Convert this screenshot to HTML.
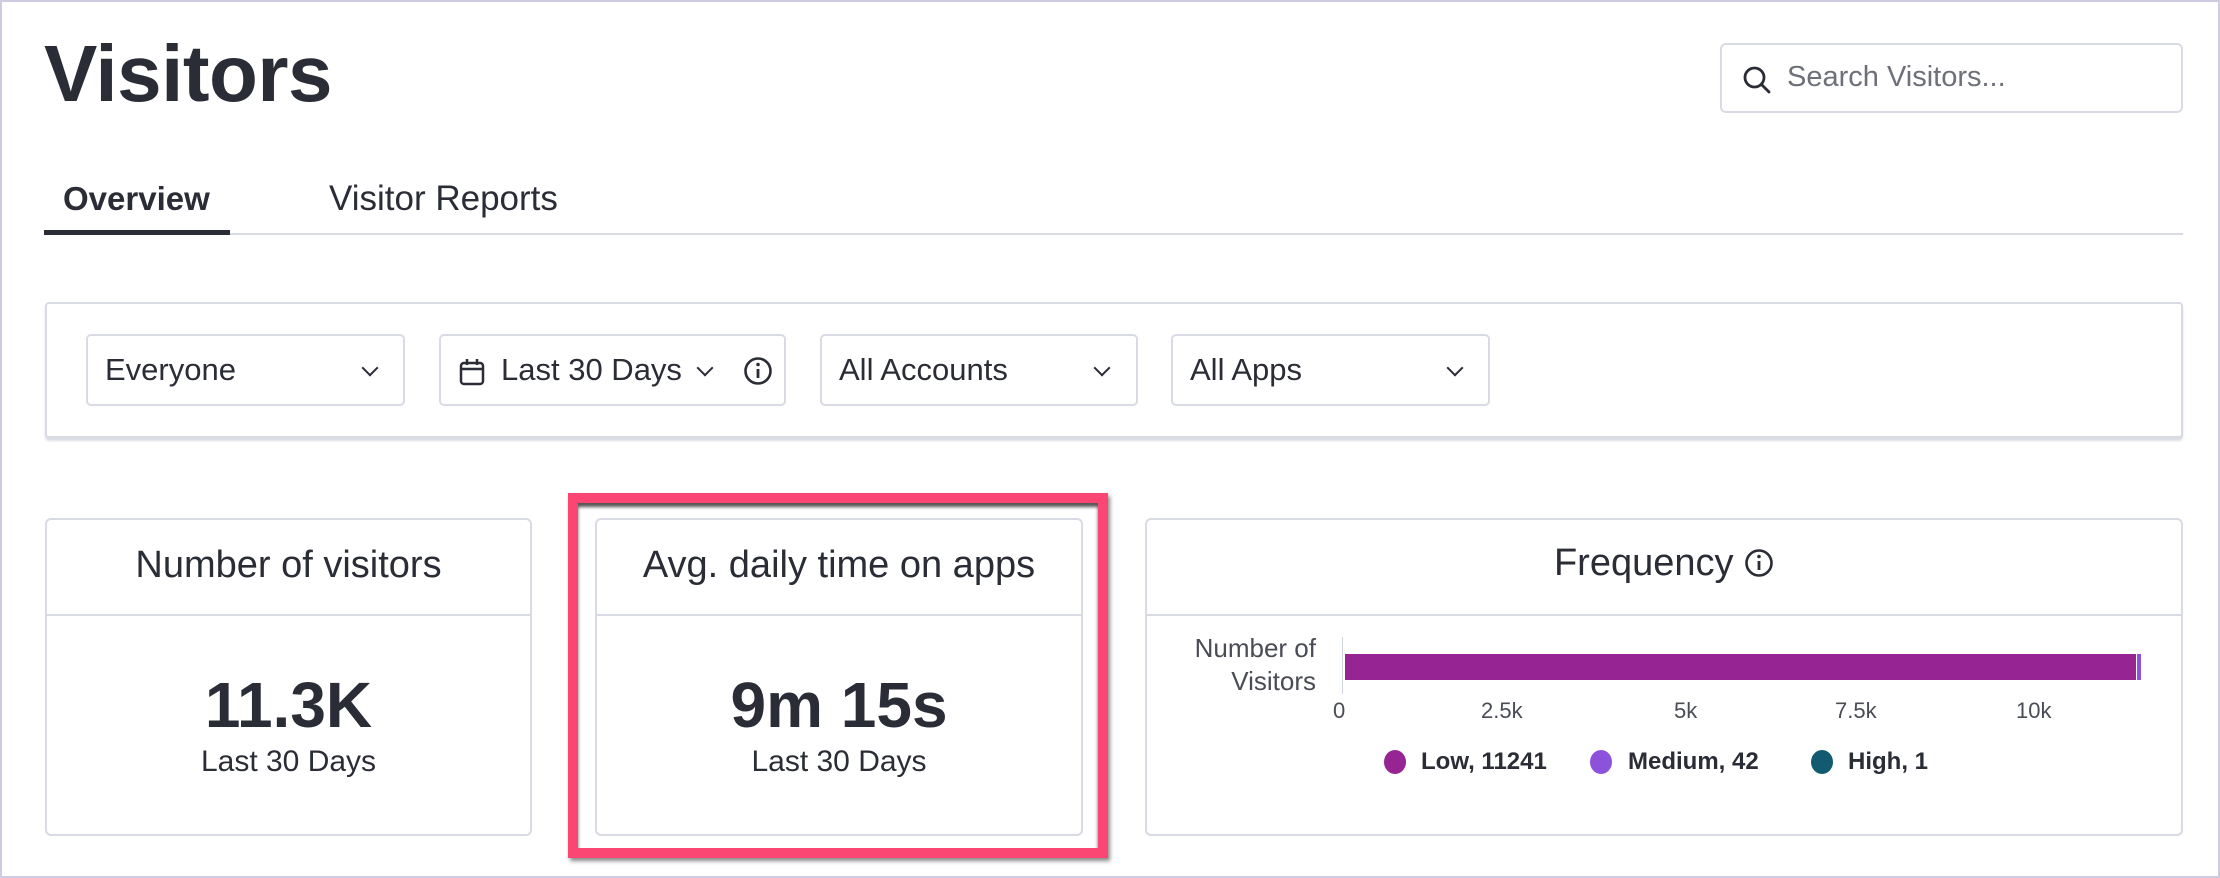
<!DOCTYPE html>
<html><head><meta charset="utf-8"><style>
*{box-sizing:border-box;margin:0;padding:0}
body{width:2220px;height:878px;background:#fff;font-family:"Liberation Sans",sans-serif;color:#2a2c36;position:relative;overflow:hidden}
.frame{position:absolute;left:0;top:0;width:2220px;height:878px;border:2px solid #cfcbe3}
.abs{position:absolute}
.box{position:absolute;border:2px solid #d9dbe4;border-radius:6px;background:#fff}
.dd{position:absolute;top:334px;height:72px;border:2px solid #d9dbe4;border-radius:5px;font-size:31px;line-height:68px;padding-left:17px}
.chev{position:absolute;top:26px;width:12px;height:12px;border-right:2.5px solid #2a2c36;border-bottom:2.5px solid #2a2c36;transform:rotate(45deg)}
.ct{position:absolute;left:0;right:0;text-align:center}
</style></head><body>
<div class="frame"></div>
<div class="abs" style="left:44px;top:28px;font-size:80px;font-weight:bold;letter-spacing:-0.5px">Visitors</div>
<div class="box" style="left:1720px;top:43px;width:463px;height:70px;">
<svg class="abs" style="left:20px;top:20px" width="30" height="30" viewBox="0 0 30 30"><circle cx="12.5" cy="12.5" r="9.5" fill="none" stroke="#2a2c36" stroke-width="2.8"/><line x1="19.5" y1="19.5" x2="27" y2="27" stroke="#2a2c36" stroke-width="2.8" stroke-linecap="round"/></svg>
<div class="abs" style="left:65px;top:16px;font-size:29px;color:#6e7079">Search Visitors...</div></div>
<div class="abs" style="left:63px;top:180px;font-size:33px;font-weight:bold">Overview</div>
<div class="abs" style="left:329px;top:179px;font-size:35px">Visitor Reports</div>
<div class="abs" style="left:44px;top:233px;width:2139px;height:2px;background:#d9dbe4"></div>
<div class="abs" style="left:44px;top:230px;width:186px;height:5px;background:#2a2c36"></div>
<div class="box" style="left:45px;top:302px;width:2138px;height:136px;border-radius:4px;box-shadow:0 3px 2px #dcdde4"></div>
<div class="dd" style="left:86px;width:319px">Everyone<span class="chev" style="left:276px"></span></div>
<div class="dd" style="left:439px;width:347px;padding-left:60px">Last 30 Days<span class="chev" style="left:258px"></span>
<svg class="abs" style="left:18px;top:22px" width="26" height="28" viewBox="0 0 26 28"><rect x="2" y="5" width="22" height="21" rx="3" fill="none" stroke="#2a2c36" stroke-width="2.5"/><line x1="2" y1="11" x2="24" y2="11" stroke="#2a2c36" stroke-width="2.5"/><line x1="8" y1="1" x2="8" y2="7" stroke="#2a2c36" stroke-width="2.5"/><line x1="18" y1="1" x2="18" y2="7" stroke="#2a2c36" stroke-width="2.5"/></svg>
<svg class="abs" style="left:302px;top:20px" width="30" height="30" viewBox="0 0 30 30"><circle cx="15" cy="15" r="12.5" fill="none" stroke="#2a2c36" stroke-width="2.6"/><line x1="15" y1="13" x2="15" y2="22" stroke="#2a2c36" stroke-width="2.8"/><circle cx="15" cy="8.5" r="1.8" fill="#2a2c36"/></svg></div>
<div class="dd" style="left:820px;width:318px">All Accounts<span class="chev" style="left:274px"></span></div>
<div class="dd" style="left:1171px;width:319px">All Apps<span class="chev" style="left:276px"></span></div>

<div class="box" style="left:45px;top:518px;width:487px;height:318px">
<div class="ct" style="top:24px;font-size:38px">Number of visitors</div>
<div class="abs" style="left:0;right:0;top:94px;height:2px;background:#d9dbe4"></div>
<div class="ct" style="top:148px;font-size:64px;font-weight:bold">11.3K</div>
<div class="ct" style="top:225px;font-size:30px">Last 30 Days</div></div>

<div class="abs" style="left:568px;top:493px;width:540px;height:365px;border:10px solid #fb4673;box-shadow:inset 0 4px 3px #555,2px 3px 4px #888"></div>
<div class="box" style="left:595px;top:518px;width:488px;height:318px">
<div class="ct" style="top:24px;font-size:38px">Avg. daily time on apps</div>
<div class="abs" style="left:0;right:0;top:94px;height:2px;background:#d9dbe4"></div>
<div class="ct" style="top:148px;font-size:64px;font-weight:bold">9m 15s</div>
<div class="ct" style="top:225px;font-size:30px">Last 30 Days</div></div>

<div class="box" style="left:1145px;top:518px;width:1038px;height:318px">
<div class="ct" style="top:22px;font-size:38px">Frequency <svg style="vertical-align:-3px" width="30" height="30" viewBox="0 0 30 30"><circle cx="15" cy="15" r="12.5" fill="none" stroke="#2a2c36" stroke-width="2.6"/><line x1="15" y1="13" x2="15" y2="22" stroke="#2a2c36" stroke-width="2.8"/><circle cx="15" cy="8.5" r="1.8" fill="#2a2c36"/></svg></div>
<div class="abs" style="left:0;right:0;top:94px;height:2px;background:#d9dbe4"></div></div>
<div class="abs" style="left:1150px;top:632px;width:166px;text-align:right;font-size:26px;line-height:33px;color:#4a4c55">Number of<br>Visitors</div>
<div class="abs" style="left:1342px;top:637px;width:1px;height:57px;background:#cfd3de"></div>
<div class="abs" style="left:1345px;top:654px;width:791px;height:26px;background:#962593"></div>
<div class="abs" style="left:2137px;top:654px;width:4px;height:26px;background:#8d52dc"></div>
<div class="abs" style="top:698px;left:1333px;font-size:22px;color:#4a4c55">0</div>
<div class="abs" style="top:698px;left:1481px;font-size:22px;color:#4a4c55">2.5k</div>
<div class="abs" style="top:698px;left:1674px;font-size:22px;color:#4a4c55">5k</div>
<div class="abs" style="top:698px;left:1835px;font-size:22px;color:#4a4c55">7.5k</div>
<div class="abs" style="top:698px;left:2016px;font-size:22px;color:#4a4c55">10k</div>
<div class="abs" style="top:750px;left:1384px;width:22px;height:24px;border-radius:50%;background:#962593"></div>
<div class="abs" style="top:748px;left:1421px;font-size:24px;font-weight:bold">Low, 11241</div>
<div class="abs" style="top:750px;left:1590px;width:22px;height:24px;border-radius:50%;background:#8d52dc"></div>
<div class="abs" style="top:748px;left:1628px;font-size:24px;font-weight:bold">Medium, 42</div>
<div class="abs" style="top:750px;left:1811px;width:22px;height:24px;border-radius:50%;background:#125a70"></div>
<div class="abs" style="top:748px;left:1848px;font-size:24px;font-weight:bold">High, 1</div>
</body></html>
